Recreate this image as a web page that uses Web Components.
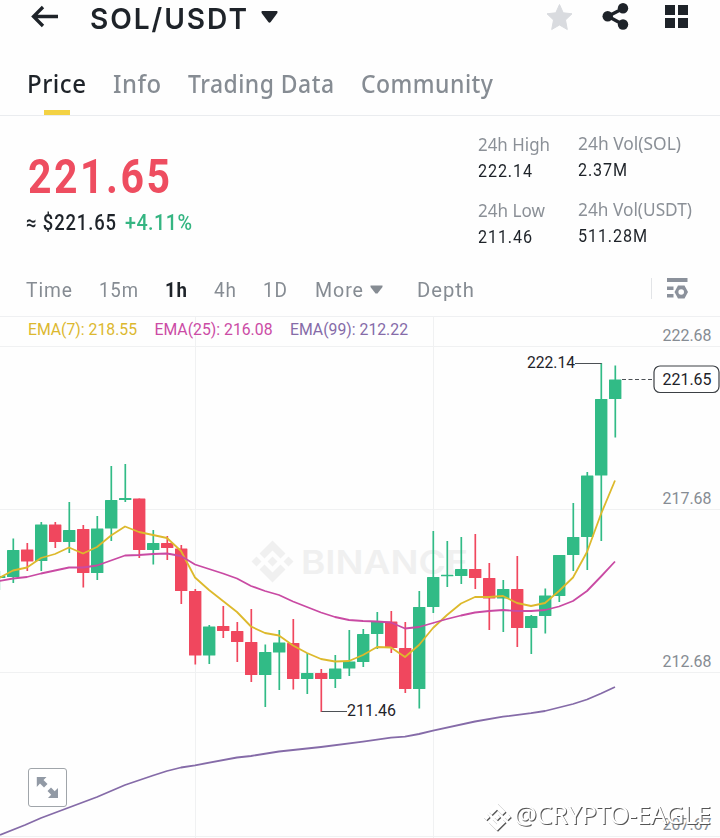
<!DOCTYPE html>
<html lang="en">
<head>
<meta charset="utf-8">
<title>SOL/USDT</title>
<style>
  body {
    margin: 0;
    width: 720px;
    height: 838px;
    overflow: hidden;
    background: #fefefe;
    color: #1e2329;
    font-family: Roboto, sans-serif;
  }
</style>
</head>
<body>
<market-page></market-page>

<script>
// Text that is stretched or squeezed to a given width
class FitText extends HTMLElement {
  constructor() {
    super();
    let shadow = this.attachShadow({mode: 'open'});
    shadow.innerHTML = `
      <style>
        :host { display: block; white-space: nowrap; }
        span { display: inline-block; transform-origin: 0 50%; }
      </style>
      <span><slot></slot></span>`;
  }

  connectedCallback() {
    let width = Number(this.getAttribute('width'));
    let spacing = Number(this.getAttribute('spacing') || 0);
    let span = this.shadowRoot.querySelector('span');
    this.style.width = width + 'px';
    span.style.letterSpacing = spacing + 'px';
    let natural = span.getBoundingClientRect().width - spacing;
    span.style.transform = 'scaleX(' + width / natural + ')';
  }
}

class PairHeader extends HTMLElement {
  constructor() {
    super();
    let shadow = this.attachShadow({mode: 'open'});
    shadow.innerHTML = `
      <style>
        :host {
          display: flex;
          align-items: flex-start;
          height: 36px;
          font: 600 29px/37px Inter, sans-serif;
        }
        svg { display: block; flex: none; }
        .back { margin: 5px 31px 0 31px; }
        .caret { margin: 10px 0 0 14px; }
        .actions { display: flex; margin-left: auto; padding-right: 31px; }
        .star { margin: 3px 29px 0 0; }
        .share { margin: 2px 35px 0 0; }
        .grid { margin-top: 4px; }
      </style>
      <svg class="back" width="28" height="23" viewBox="0 0 28 23">
        <path d="M27 11.500H3M12 2L2.500 11.500L12 21" fill="none" stroke="#1e2329" stroke-width="3.300"/>
      </svg>
      <slot></slot>
      <svg class="caret" width="17" height="14" viewBox="0 0 17 14">
        <path d="M1.200 1H15.800Q17 1 16.400 3L9.700 12Q8.500 13.300 7.300 12L.6 3Q0 1 1.200 1Z" fill="#1e2329"/>
      </svg>
      <div class="actions">
        <svg class="star" width="27" height="28" viewBox="0 0 27 28">
          <path d="M13.500 1.500L17.200 9.800L26 10.800L19.500 17L21.300 26.500L13.500 22L5.700 26.500L7.500 17L1 10.800L9.800 9.800Z" fill="#d9dbdf" stroke="#d9dbdf" stroke-linejoin="round"/>
        </svg>
        <svg class="share" width="27" height="29" viewBox="0 0 27 29">
          <path d="M21 6.500L6 14.300L21 22.500" fill="none" stroke="#1e2329" stroke-width="3.400"/>
          <circle cx="21" cy="6.300" r="5.200" fill="#1e2329"/>
          <circle cx="5.700" cy="14.300" r="5.200" fill="#1e2329"/>
          <circle cx="21" cy="22.500" r="5.200" fill="#1e2329"/>
        </svg>
        <svg class="grid" width="25" height="25" viewBox="0 0 25 25">
          <path d="M1 1H11V11H1ZM14 1H24V11H14ZM1 14H11V24H1ZM14 14H24V24H14Z" fill="#1e2329"/>
        </svg>
      </div>`;
  }
}

class PageTab extends HTMLElement {
  constructor() {
    super();
    let shadow = this.attachShadow({mode: 'open'});
    shadow.innerHTML = `
      <style>
        :host {
          display: flex;
          flex-direction: column;
          align-items: center;
          color: #868c93;
        }
        :host([active]) { color: #1e2329; }
        .bar { width: 26px; height: 5px; margin-top: 6px; }
        :host([active]) .bar { background: #f3d244; }
      </style>
      <slot></slot>
      <div class="bar"></div>`;
  }
}

class PageTabs extends HTMLElement {
  constructor() {
    super();
    let shadow = this.attachShadow({mode: 'open'});
    shadow.innerHTML = `
      <style>
        :host {
          display: flex;
          gap: 27px;
          padding: 27px 0 0 27px;
          border-bottom: 1px solid #eaecef;
          font: 500 24.500px/41px "Noto Sans", sans-serif;
        }
      </style>
      <slot></slot>`;
  }
}

class StatItem extends HTMLElement {
  constructor() {
    super();
    let shadow = this.attachShadow({mode: 'open'});
    shadow.innerHTML = `
      <style>
        :host { display: block; font-size: 18.500px; line-height: 26px; }
        .label { color: #8b9097; font: 17.500px/24px "Noto Sans", sans-serif; padding-bottom: 2px; }
      </style>
      <div class="label"><slot name="label"></slot></div>
      <slot></slot>`;
  }
}

class PriceSummary extends HTMLElement {
  constructor() {
    super();
    let shadow = this.attachShadow({mode: 'open'});
    shadow.innerHTML = `
      <style>
        :host { display: flex; height: 148px; }
        .last { width: 450px; padding: 36px 0 0 28px; }
        .price { color: #ee4d60; font: 700 49px/50px Roboto, sans-serif; }
        .sub {
          display: flex;
          gap: 9px;
          margin: 6px 0 0 -2px;
          font: 500 21.500px/30px Roboto, sans-serif;
        }
        .change { color: #35b582; }
        .stats { display: flex; gap: 30px; }
        .column { display: flex; flex-direction: column; gap: 14px; width: 70px; padding-top: 16px; }
        .column + .column { padding-top: 15px; }
      </style>
      <div class="last">
        <fit-text class="price" width="142" spacing="3">221.65</fit-text>
        <div class="sub">
          <fit-text width="90" spacing="1">≈ $221.65</fit-text>
          <fit-text class="change" width="67" spacing="0.5">+4.11%</fit-text>
        </div>
      </div>
      <div class="stats">
        <div class="column">
          <stat-item><fit-text slot="label" width="72">24h High</fit-text><fit-text width="54" spacing="1">222.14</fit-text></stat-item>
          <stat-item><fit-text slot="label" width="67">24h Low</fit-text><fit-text width="54" spacing="1">211.46</fit-text></stat-item>
        </div>
        <div class="column">
          <stat-item><fit-text slot="label" width="103">24h Vol(SOL)</fit-text><fit-text width="49" spacing="1">2.37M</fit-text></stat-item>
          <stat-item><fit-text slot="label" width="114">24h Vol(USDT)</fit-text><fit-text width="69" spacing="1">511.28M</fit-text></stat-item>
        </div>
      </div>`;
  }
}

class IntervalBar extends HTMLElement {
  constructor() {
    super();
    let shadow = this.attachShadow({mode: 'open'});
    shadow.innerHTML = `
      <style>
        :host {
          display: flex;
          align-items: center;
          box-sizing: border-box;
          height: 53px;
          padding: 0 32px 1px 26px;
          border-bottom: 1px solid #eff0f2;
          color: #868c93;
          font-size: 21px;
          line-height: 30px;
        }
        .items { display: flex; gap: 27px; }
        .active { color: #1e2329; font-weight: 700; }
        .more { display: flex; align-items: center; gap: 7px; margin: 0 7px 0 1px; }
        .tools { display: flex; align-items: center; gap: 15px; margin: -2px 0 0 auto; }
        .divider { width: 1px; height: 21px; background: #e2e4e7; }
      </style>
      <div class="items">
        <fit-text width="46" spacing="1">Time</fit-text>
        <fit-text width="39" spacing="1">15m</fit-text>
        <fit-text class="active" width="22" spacing="1">1h</fit-text>
        <fit-text width="22" spacing="1">4h</fit-text>
        <fit-text width="24" spacing="1">1D</fit-text>
        <div class="more">
          <fit-text width="48" spacing="1">More</fit-text>
          <svg width="13" height="10" viewBox="0 0 13 10"><path d="M.5 .5H12.500V2L7.500 8.500H5.500L.5 2Z" fill="#868c93"/></svg>
        </div>
        <fit-text width="57" spacing="1">Depth</fit-text>
      </div>
      <div class="tools">
        <div class="divider"></div>
        <svg width="21" height="22" viewBox="0 0 21 22">
          <path d="M0 0H20.500V4H0ZM0 8.500H6.500V12H0ZM0 16H6.500V19.500H0Z" fill="#8b919b"/>
          <path fill-rule="evenodd" d="M11 7.500H17.500L21 14L17.500 20.500H11L7.500 14ZM14.200 11.200A2.800 2.800 0 1 0 14.200 16.800A2.800 2.800 0 1 0 14.200 11.200Z" fill="#8b919b"/>
        </svg>
      </div>`;
  }
}

// [wick top, body top, body bottom, wick bottom, up], 14px apart from x = -1
const CANDLES = [
  [571, 576, 578, 590, 1],
  [538.5, 550, 577, 583, 1],
  [543, 549.5, 561.5, 571, 0],
  [522, 524.5, 561, 571, 1],
  [522, 524.5, 542, 548, 0],
  [502, 530, 542, 553, 1],
  [525, 529, 573, 587.5, 0],
  [516, 528.5, 573, 580, 1],
  [466, 500, 528.5, 541, 1],
  [464, 498, 500, 502, 1],
  [498.5, 498.5, 550, 558, 0],
  [530, 543, 550, 564.5, 1],
  [536, 543, 548, 560, 0],
  [545, 548.5, 591, 604, 0],
  [589, 591, 655.5, 664.5, 0],
  [625, 626.5, 655.5, 664, 1],
  [606, 626, 631, 638, 0],
  [622, 631, 642, 662, 0],
  [609, 642, 675, 682, 0],
  [644.5, 652, 675, 707, 1],
  [630, 642.5, 652.5, 690, 1],
  [619, 643, 679, 689.5, 0],
  [653, 673, 679, 694, 1],
  [669, 673, 679, 712, 0],
  [655, 668.5, 679, 688, 1],
  [630, 661.5, 668.5, 676, 1],
  [629, 634, 662, 667, 1],
  [612, 621, 634, 649, 1],
  [611, 621.5, 648, 653, 0],
  [622, 648, 689, 693, 0],
  [591, 607, 689, 708.5, 1],
  [531, 577, 607, 613, 1],
  [541, 574.8, 576.2, 587, 1],
  [537, 569, 576, 584, 1],
  [534, 569, 578, 589, 0],
  [563, 578, 598.5, 630, 0],
  [580, 589, 598.5, 632, 1],
  [556, 589, 628, 647, 0],
  [615, 616, 628, 654, 1],
  [588.5, 595.5, 616, 633.5, 1],
  [555, 555, 596, 602, 1],
  [503, 537, 555, 571, 1],
  [472, 475.5, 537, 570, 1],
  [363, 399, 475.5, 541, 1],
  [365.5, 379.5, 399, 437.5, 1]
];

const EMA7 = [578, 570.5, 567.5, 558, 554, 547.5, 553.5, 547, 535.5, 526.5, 532, 535, 538,
  551, 577.5, 590, 601, 612, 626.5, 633, 635.5, 645.5, 653, 659, 661.5, 661, 655, 647, 647.5,
  657, 645, 628, 615, 603.5, 597, 597, 596, 603, 606, 603, 591, 577.5, 552, 514, 480.5];

const EMA25 = [581, 578.5, 577, 573.5, 570.5, 567.5, 567.5, 565.5, 560.5, 555.5, 555, 554,
  553.5, 556, 564.5, 569, 573.5, 578.5, 586, 591, 595, 601.5, 607, 612.5, 617, 620, 621, 621.5,
  622.5, 628.5, 627, 623, 619, 615.5, 612.5, 611, 610, 611, 611, 610, 606.5, 601, 591, 576.5, 561.5];

const EMA99 = '0,835 25,825 41,818 69,807.5 97,797 125,785 153,775.5 167,771 181,767.500 195,765.300 ' +
  '237,757.500 251,756 279,751.500 321,747 363,741.700 391,737.700 405,736.700 419,734 433,730.700 ' +
  '475,721.500 503,716.700 531,713.200 545,711 573,704 587,699.500 601,693.500 615,687';

class CandleChart extends HTMLElement {
  constructor() {
    super();
    let shadow = this.attachShadow({mode: 'open'});
    shadow.innerHTML = `
      <style>
        :host { display: block; height: 521px; }
        svg { display: block; font-family: Roboto, sans-serif; font-size: 16.500px; }
        .grid { stroke: #f0f1f2; fill: none; }
        .line { fill: none; stroke-width: 1.800; stroke-linejoin: round; }
        .brand { fill: #f0f0f0; }
        .handle { fill: #fff; font: 25.500px "Noto Sans", sans-serif; filter: drop-shadow(1px 1px .3px #555); }
      </style>
      <svg width="720" height="521" viewBox="0 317 720 521">
        <path class="grid" d="M0 346.500H720M0 509.500H720M0 672.500H720M0 836.500H720M195.500 317V838M433.500 317V838"/>
        <g class="brand">
          ${this.logo(272.5, 561.5, 1)}
          <text x="301" y="573.500" textLength="167" lengthAdjust="spacingAndGlyphs" font-family="Inter, sans-serif" font-weight="600" font-size="32">BINANCE</text>
        </g>
        ${this.candles()}
        <polyline class="line" stroke="#ddb92c" points="${this.points(EMA7)}"/>
        <polyline class="line" stroke="#c94aa3" points="${this.points(EMA25)}"/>
        <polyline class="line" stroke="#856ba8" points="${EMA99}"/>
        ${this.label(28, 335, 109, 'EMA(7): 218.55', '#dcb82f')}
        ${this.label(154.5, 335, 118, 'EMA(25): 216.08', '#cb4ba5')}
        ${this.label(290, 335, 118, 'EMA(99): 212.22', '#856ba8')}
        ${this.label(662.5, 341, 49, '222.68', '#868c93')}
        ${this.label(662.5, 504, 49, '217.68', '#868c93')}
        ${this.label(662.5, 667, 49, '212.68', '#868c93')}
        ${this.label(662.5, 830, 49, '207.67', '#868c93')}
        ${this.label(527, 368, 48, '222.14', '#1e2329')}
        ${this.label(347, 716, 49, '211.46', '#1e2329')}
        <path d="M575 363.500H601.500M321.500 711.500H347" fill="none" stroke="#4c5055"/>
        <path d="M622 379.500H654" fill="none" stroke="#4c5055" stroke-dasharray="4 2.500"/>
        <rect x="654" y="366" width="65" height="26.500" rx="6" fill="#fff" stroke="#3c4045" stroke-width="1.200"/>
        ${this.label(662.5, 385, 49, '221.65', '#1e2329')}
        <rect x="28.500" y="768.500" width="38" height="38" rx="2.500" fill="#fff" stroke="#a0a5aa"/>
        <path d="M36.800 777H46.500L43.500 780L47.500 784L44 787.500L40 783.500L36.800 787ZM58 798H48L51.200 794.800L47.500 791L51 787.500L54.700 791.200L58 788Z" fill="#929aa5"/>
        <g class="handle">
          ${this.logo(497, 817, 0.66)}
          <text x="514" y="823.500" textLength="197">@CRYPTO-EAGLE</text>
        </g>
      </svg>`;
  }

  points(values) {
    return values.map((y, i) => (i * 14 - 1) + ',' + y).join(' ');
  }

  candles() {
    return CANDLES.map(([high, top, bottom, low, up], i) => {
      let x = i * 14 - 1;
      let color = up ? '#31bb86' : '#f0475e';
      return `<path d="M${x + .3} ${high}V${low}" stroke="${color}" stroke-width="1.700"/>` +
        `<rect x="${x - 6}" y="${top}" width="12.400" height="${bottom - top}" rx=".5" fill="${color}"/>`;
    }).join('');
  }

  label(x, y, width, text, color) {
    return `<text x="${x}" y="${y}" textLength="${width}" lengthAdjust="spacingAndGlyphs" fill="${color}">${text}</text>`;
  }

  // Diamond mark: two chevrons with three small diamonds between them
  logo(x, y, scale) {
    return `<path transform="translate(${x} ${y}) scale(${scale})" d="M0 -21L13 -8L8 -3L0 -11L-8 -3L-13 -8Z
      M0 21L13 8L8 3L0 11L-8 3L-13 8Z M0 -5L5 0L0 5L-5 0Z M-16 -5L-11 0L-16 5L-21 0Z M16 -5L21 0L16 5L11 0Z"/>`;
  }
}

class MarketPage extends HTMLElement {
  constructor() {
    super();
    let shadow = this.attachShadow({mode: 'open'});
    shadow.innerHTML = `
      <style>
        :host { display: flex; flex-direction: column; width: 720px; }
      </style>
      <pair-header><fit-text width="157" spacing="2">SOL/USDT</fit-text></pair-header>
      <page-tabs>
        <page-tab active><fit-text width="59" spacing="0.5">Price</fit-text></page-tab>
        <page-tab><fit-text width="48" spacing="0.5">Info</fit-text></page-tab>
        <page-tab><fit-text width="146" spacing="0.5">Trading Data</fit-text></page-tab>
        <page-tab><fit-text width="132" spacing="0.5">Community</fit-text></page-tab>
      </page-tabs>
      <price-summary></price-summary>
      <interval-bar></interval-bar>
      <candle-chart></candle-chart>`;
  }
}

customElements.define('fit-text', FitText);
customElements.define('pair-header', PairHeader);
customElements.define('page-tab', PageTab);
customElements.define('page-tabs', PageTabs);
customElements.define('stat-item', StatItem);
customElements.define('price-summary', PriceSummary);
customElements.define('interval-bar', IntervalBar);
customElements.define('candle-chart', CandleChart);
customElements.define('market-page', MarketPage);
</script>
</body>
</html>
